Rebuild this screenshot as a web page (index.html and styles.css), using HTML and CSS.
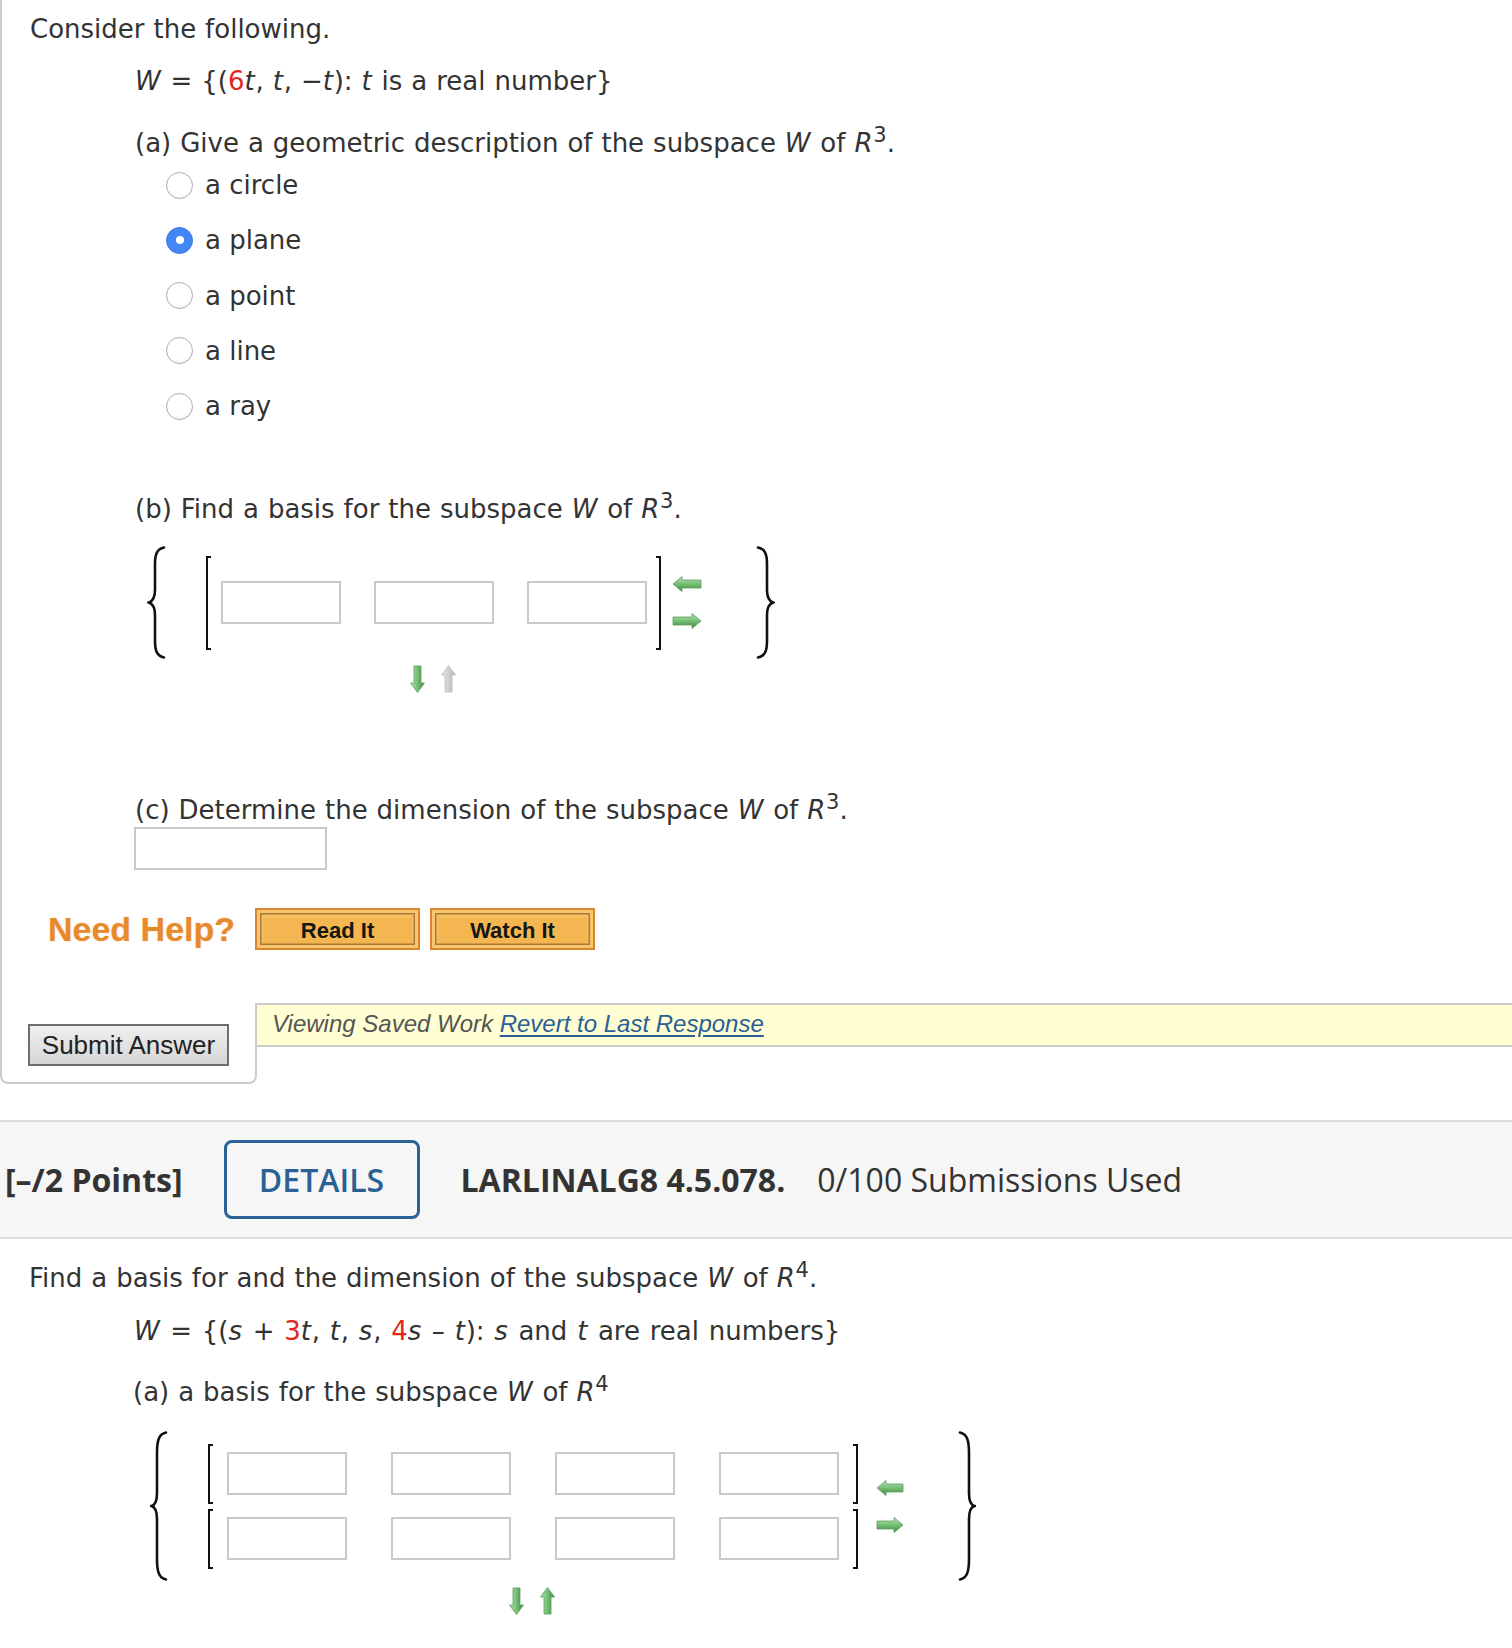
FILE: index.html
```html
<!DOCTYPE html>
<html>
<head>
<meta charset="utf-8">
<title>Subspace</title>
<link rel="stylesheet" href="styles.css">
</head>
<body>
<svg class="defs" width="0" height="0" aria-hidden="true">
  <defs>
    <linearGradient id="gArrowH" x1="0" y1="0" x2="0" y2="1">
      <stop offset="0" stop-color="#b4e3b4"/>
      <stop offset="0.45" stop-color="#7cc27c"/>
      <stop offset="1" stop-color="#3d8a3d"/>
    </linearGradient>
    <linearGradient id="gArrowV" x1="0" y1="0" x2="1" y2="0">
      <stop offset="0" stop-color="#b4e3b4"/>
      <stop offset="0.45" stop-color="#7cc27c"/>
      <stop offset="1" stop-color="#3d8a3d"/>
    </linearGradient>
    <linearGradient id="gArrowGray" x1="0" y1="0" x2="1" y2="0">
      <stop offset="0" stop-color="#e6e6e6"/>
      <stop offset="1" stop-color="#b8b8b8"/>
    </linearGradient>
  </defs>
</svg>

<div class="q1">
  <div class="q1-body">
    <p class="line intro">Consider the following.</p>
    <p class="line formula"><i>W</i> = {(<span class="red">6</span><i>t</i>, <i>t</i>, −<i>t</i>): <i>t</i> is a real number}</p>
    <p class="line part part-a">(a) Give a geometric description of the subspace <i>W</i> of <i>R</i><sup>3</sup>.</p>
    <ul class="radios">
      <li><span class="radio"></span>a circle</li>
      <li><span class="radio checked"></span>a plane</li>
      <li><span class="radio"></span>a point</li>
      <li><span class="radio"></span>a line</li>
      <li><span class="radio"></span>a ray</li>
    </ul>
    <p class="line part part-b">(b) Find a basis for the subspace <i>W</i> of <i>R</i><sup>3</sup>.</p>

    <div class="basis basis1">
      <svg class="brace" width="20" height="113" viewBox="0 0 20 113"><path d="M17 1.5 C10 3 8 8 8 18 L8 44 C8 51 6 55 2 56.5 C6 58 8 62 8 69 L8 95 C8 105 10 110 17 111.5" fill="none" stroke="#111" stroke-width="2.6" stroke-linecap="round"/></svg>
      <div class="vectors">
        <div class="vec">
          <span class="bk bk-l"></span>
          <span class="field"></span><span class="field"></span><span class="field"></span>
          <span class="bk bk-r"></span>
        </div>
      </div>
      <div class="lr-arrows">
        <svg width="30" height="16" viewBox="0 0 30 16"><polygon points="1,8 10,0.5 10,4 29,4 29,12 10,12 10,15.5" fill="url(#gArrowH)" stroke="#5b9f5b" stroke-width="0.8"/></svg>
        <svg width="30" height="16" viewBox="0 0 30 16"><polygon points="29,8 20,0.5 20,4 1,4 1,12 20,12 20,15.5" fill="url(#gArrowH)" stroke="#5b9f5b" stroke-width="0.8"/></svg>
      </div>
      <svg class="brace brace-r" width="20" height="113" viewBox="0 0 20 113"><path d="M3 1.5 C10 3 12 8 12 18 L12 44 C12 51 14 55 18 56.5 C14 58 12 62 12 69 L12 95 C12 105 10 110 3 111.5" fill="none" stroke="#111" stroke-width="2.6" stroke-linecap="round"/></svg>
    </div>
    <div class="ud-arrows ud1">
      <svg width="15" height="28" viewBox="0 0 15 28"><polygon points="4,1 11,1 11,18 14.5,18 7.5,27.5 0.5,18 4,18" fill="url(#gArrowV)" stroke="#5b9f5b" stroke-width="0.8"/></svg>
      <svg width="15" height="28" viewBox="0 0 15 28"><polygon points="7.5,0.5 14.5,10 11,10 11,27 4,27 4,10 0.5,10" fill="url(#gArrowGray)" stroke="#bdbdbd" stroke-width="0.8"/></svg>
    </div>

    <p class="line part part-c">(c) Determine the dimension of the subspace <i>W</i> of <i>R</i><sup>3</sup>.</p>
    <div class="answer-box"></div>

    <div class="help">
      <span class="need-help">Need Help?</span>
      <span class="help-btn">Read It</span>
      <span class="help-btn">Watch It</span>
    </div>
  </div>
  <div class="q1-footer">
    <div class="submit-cell"><span class="submit">Submit Answer</span></div>
    <div class="saved-bar">Viewing Saved Work <a class="revert">Revert to Last Response</a></div>
  </div>
</div>

<div class="qheader">
  <span class="points">[–/2 Points]</span>
  <span class="details">DETAILS</span>
  <span class="qid">LARLINALG8 4.5.078.</span>
  <span class="subs">0/100 Submissions Used</span>
</div>

<div class="q2-body">
  <p class="line intro2">Find a basis for and the dimension of the subspace <i>W</i> of <i>R</i><sup>4</sup>.</p>
  <p class="line formula2"><i>W</i> = {(<i>s</i> + <span class="red">3</span><i>t</i>, <i>t</i>, <i>s</i>, <span class="red">4</span><i>s</i> – <i>t</i>): <i>s</i> and <i>t</i> are real numbers}</p>
  <p class="line part part2-a">(a) a basis for the subspace <i>W</i> of <i>R</i><sup>4</sup></p>

  <div class="basis basis2">
    <svg class="brace" width="18" height="150" viewBox="0 0 18 150"><path d="M16 1.5 C9 3 7 9 7 22 L7 62 C7 70 5 74 1.5 75 C5 76 7 80 7 88 L7 128 C7 141 9 147 16 148.5" fill="none" stroke="#111" stroke-width="2.6" stroke-linecap="round"/></svg>
    <div class="vectors vectors2">
      <div class="vec vec2">
        <span class="bk bk-l"></span>
        <span class="field"></span><span class="field"></span><span class="field"></span><span class="field"></span>
        <span class="bk bk-r"></span>
      </div>
      <div class="vec vec2">
        <span class="bk bk-l"></span>
        <span class="field"></span><span class="field"></span><span class="field"></span><span class="field"></span>
        <span class="bk bk-r"></span>
      </div>
    </div>
    <div class="lr-arrows lr2">
      <svg width="28" height="16" viewBox="0 0 28 16"><polygon points="1,8 10,0.5 10,4 27,4 27,12 10,12 10,15.5" fill="url(#gArrowH)" stroke="#5b9f5b" stroke-width="0.8"/></svg>
      <svg width="28" height="16" viewBox="0 0 28 16"><polygon points="27,8 18,0.5 18,4 1,4 1,12 18,12 18,15.5" fill="url(#gArrowH)" stroke="#5b9f5b" stroke-width="0.8"/></svg>
    </div>
    <svg class="brace brace-r2" width="18" height="150" viewBox="0 0 18 150"><path d="M2 1.5 C9 3 11 9 11 22 L11 62 C11 70 13 74 16.5 75 C13 76 11 80 11 88 L11 128 C11 141 9 147 2 148.5" fill="none" stroke="#111" stroke-width="2.6" stroke-linecap="round"/></svg>
  </div>
  <div class="ud-arrows ud2">
    <svg width="15" height="28" viewBox="0 0 15 28"><polygon points="4,1 11,1 11,18 14.5,18 7.5,27.5 0.5,18 4,18" fill="url(#gArrowV)" stroke="#5b9f5b" stroke-width="0.8"/></svg>
    <svg width="15" height="28" viewBox="0 0 15 28"><polygon points="7.5,0.5 14.5,10 11,10 11,27 4,27 4,10 0.5,10" fill="url(#gArrowV)" stroke="#5b9f5b" stroke-width="0.8"/></svg>
  </div>
</div>
</body>
</html>
```

FILE: styles.css
```css
html, body {
  margin: 0;
  padding: 0;
  background: #ffffff;
}
body {
  width: 1512px;
  min-height: 1648px;
  font-family: "DejaVu Sans", Verdana, sans-serif;
  font-size: 26px;
  color: #333333;
  overflow: hidden;
}
.defs {
  display: block;
  width: 0;
  height: 0;
  overflow: hidden;
}
.line {
  margin: 0;
  line-height: 30px;
  white-space: nowrap;
  word-spacing: 0.7px;
}
i {
  font-style: italic;
  letter-spacing: 0.8px;
}
sup {
  font-size: 21px;
  line-height: 0;
  vertical-align: 10px;
  letter-spacing: 0;
}
.red {
  color: #e2261c;
}

/* ---------- question 1 ---------- */
.q1-body {
  border-left: 2px solid #cccccc;
  padding: 14px 0 53px 28px;
}
.formula {
  margin-top: 22px;
  margin-left: 105px;
}
.part {
  margin-left: 105px;
}
.part-a {
  margin-top: 32px;
}
.radios {
  list-style: none;
  margin: 12px 0 0 136px;
  padding: 0;
  display: flex;
  flex-direction: column;
  gap: 25.25px;
}
.radios li {
  display: flex;
  align-items: center;
  height: 30px;
  line-height: 30px;
}
.radio {
  width: 27px;
  height: 27px;
  box-sizing: border-box;
  border-radius: 50%;
  border: 1.5px solid #ababab;
  background: radial-gradient(circle at 50% 35%, #ffffff 55%, #f1f1f1 100%);
  margin-right: 12px;
  flex: none;
  display: flex;
  align-items: center;
  justify-content: center;
}
.radio.checked {
  border: 1px solid #3a7ae6;
  background: #4386f5;
}
.radio.checked::after {
  content: "";
  width: 8px;
  height: 8px;
  border-radius: 50%;
  background: #ffffff;
}
.part-b {
  margin-top: 73px;
}

/* basis blocks */
.basis {
  display: flex;
  align-items: center;
}
.brace {
  display: block;
  flex: none;
}
.basis1 {
  margin-top: 22px;
  margin-left: 117px;
}
.basis1 .vectors {
  margin-left: 39px;
}
.vec {
  display: flex;
  align-items: center;
  height: 94px;
}
.bk {
  align-self: stretch;
  width: 5px;
  box-sizing: border-box;
  border: 2px solid #111111;
  flex: none;
}
.bk-l {
  border-right: none;
  margin-right: 10px;
}
.bk-r {
  border-left: none;
  margin-left: 9px;
}
.field {
  width: 120px;
  height: 43px;
  box-sizing: border-box;
  border: 2px solid #c9c9c9;
  background: #ffffff;
  flex: none;
}
.basis1 .field + .field {
  margin-left: 33px;
}
.lr-arrows {
  display: flex;
  flex-direction: column;
  gap: 21px;
  margin-left: 11px;
}
.lr-arrows svg {
  display: block;
}
.brace-r {
  margin-left: 53px;
}
.ud-arrows {
  display: flex;
  gap: 16px;
}
.ud-arrows svg {
  display: block;
}
.ud1 {
  margin-top: 6px;
  padding-left: 380px;
}

.part-c {
  margin-top: 102px;
}
.answer-box {
  margin: 2px 0 0 104px;
  width: 193px;
  height: 43px;
  box-sizing: border-box;
  border: 2px solid #c9c9c9;
}

/* need help */
.help {
  display: flex;
  align-items: center;
  margin: 38px 0 0 18px;
  height: 42px;
}
.need-help {
  font-family: "Liberation Sans", Arial, sans-serif;
  font-weight: bold;
  font-size: 34px;
  color: #e68a2e;
  text-shadow: 0 0 2px rgba(240, 160, 80, 0.45);
  margin-right: 20px;
  white-space: nowrap;
}
.help-btn {
  width: 165px;
  height: 42px;
  box-sizing: border-box;
  border: 2px solid #d9862f;
  background: #f4b650;
  box-shadow: inset 0 0 0 3px #f7c66f, inset 0 0 0 4.5px #a8783c, inset 0 2px 0 6px #f6c061;
  display: flex;
  align-items: center;
  justify-content: center;
  font-family: "Liberation Sans", Arial, sans-serif;
  font-weight: bold;
  font-size: 22px;
  color: #161616;
  padding-top: 3px;
}
.help-btn + .help-btn {
  margin-left: 10px;
}

/* footer */
.q1-footer {
  display: flex;
  align-items: flex-start;
}
.submit-cell {
  width: 257px;
  box-sizing: border-box;
  border-left: 2px solid #cccccc;
  border-right: 2px solid #cccccc;
  border-bottom: 2px solid #cccccc;
  border-radius: 0 0 8px 8px;
  padding: 21px 0 16px 26px;
  flex: none;
}
.submit {
  display: flex;
  align-items: center;
  justify-content: center;
  width: 201px;
  height: 42px;
  box-sizing: border-box;
  border: 2px solid #6e6e6e;
  background: linear-gradient(#efefef, #d6d6d6);
  font-family: "Liberation Sans", Arial, sans-serif;
  font-size: 26px;
  color: #222222;
}
.saved-bar {
  flex: 1;
  height: 44px;
  box-sizing: border-box;
  border-top: 2px solid #cccccc;
  border-bottom: 2px solid #cccccc;
  background: #ffffd3;
  padding-left: 15px;
  font-family: "Liberation Sans", Arial, sans-serif;
  font-style: italic;
  font-size: 24px;
  line-height: 38px;
  color: #555555;
  white-space: nowrap;
}
.revert {
  color: #2a5f98;
  text-decoration: underline;
  text-underline-offset: 3px;
}

/* question header band */
.qheader {
  margin-top: 36px;
  height: 119px;
  box-sizing: border-box;
  border-top: 2px solid #dddddd;
  border-bottom: 2px solid #dddddd;
  background: #f6f6f6;
  display: flex;
  align-items: center;
  padding-left: 5px;
  font-family: "Open Sans", sans-serif;
  font-size: 32px;
  color: #333333;
  white-space: nowrap;
}
.points {
  font-weight: bold;
}
.details {
  margin-left: 41px;
  width: 196px;
  height: 79px;
  box-sizing: border-box;
  border: 3px solid #2a6295;
  border-radius: 8px;
  color: #2a6295;
  font-weight: 600;
  display: flex;
  align-items: center;
  justify-content: center;
}
.qid {
  margin-left: 41px;
  font-weight: bold;
}
.subs {
  margin-left: 32px;
}

/* question 2 */
.q2-body {
  padding-left: 29px;
}
.intro2 {
  margin-top: 24px;
}
.formula2 {
  margin-top: 23px;
  margin-left: 105px;
  word-spacing: 1.5px;
}
.part2-a {
  margin-top: 31px;
  margin-left: 104px;
}
.basis2 {
  margin-top: 24px;
  margin-left: 121px;
}
.vectors2 {
  margin-left: 40px;
  display: flex;
  flex-direction: column;
  gap: 5px;
}
.vec2 {
  height: 60px;
}
.vec2 .bk-l {
  margin-right: 14px;
}
.vec2 .bk-r {
  margin-left: 14px;
}
.vec2 .field + .field {
  margin-left: 44px;
}
.lr2 {
  margin-left: 18px;
  gap: 21px;
}
.brace-r2 {
  margin-left: 54px;
}
.ud2 {
  margin-top: 6px;
  padding-left: 480px;
}
```
